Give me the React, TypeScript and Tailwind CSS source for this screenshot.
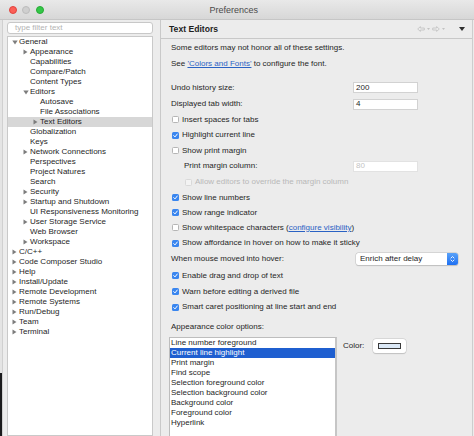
import React from 'react';

type TreeNode = {
  label: string;
  level: 0 | 1 | 2;
  arrow?: 'right' | 'down';
  selected?: boolean;
};

const TREE: TreeNode[] = [
  { label: 'General', level: 0, arrow: 'down' },
  { label: 'Appearance', level: 1, arrow: 'right' },
  { label: 'Capabilities', level: 1 },
  { label: 'Compare/Patch', level: 1 },
  { label: 'Content Types', level: 1 },
  { label: 'Editors', level: 1, arrow: 'down' },
  { label: 'Autosave', level: 2 },
  { label: 'File Associations', level: 2 },
  { label: 'Text Editors', level: 2, arrow: 'right', selected: true },
  { label: 'Globalization', level: 1 },
  { label: 'Keys', level: 1 },
  { label: 'Network Connections', level: 1, arrow: 'right' },
  { label: 'Perspectives', level: 1 },
  { label: 'Project Natures', level: 1 },
  { label: 'Search', level: 1 },
  { label: 'Security', level: 1, arrow: 'right' },
  { label: 'Startup and Shutdown', level: 1, arrow: 'right' },
  { label: 'UI Responsiveness Monitoring', level: 1 },
  { label: 'User Storage Service', level: 1, arrow: 'right' },
  { label: 'Web Browser', level: 1 },
  { label: 'Workspace', level: 1, arrow: 'right' },
  { label: 'C/C++', level: 0, arrow: 'right' },
  { label: 'Code Composer Studio', level: 0, arrow: 'right' },
  { label: 'Help', level: 0, arrow: 'right' },
  { label: 'Install/Update', level: 0, arrow: 'right' },
  { label: 'Remote Development', level: 0, arrow: 'right' },
  { label: 'Remote Systems', level: 0, arrow: 'right' },
  { label: 'Run/Debug', level: 0, arrow: 'right' },
  { label: 'Team', level: 0, arrow: 'right' },
  { label: 'Terminal', level: 0, arrow: 'right' },
];

const INDENT = { 0: 'pl-[4px]', 1: 'pl-[15px]', 2: 'pl-[25px]' } as const;

const COLOR_OPTIONS = [
  'Line number foreground',
  'Current line highlight',
  'Print margin',
  'Find scope',
  'Selection foreground color',
  'Selection background color',
  'Background color',
  'Foreground color',
  'Hyperlink',
];

function Triangle({ dir }: { dir: 'right' | 'down' }) {
  return dir === 'right' ? (
    <svg width="5" height="6" viewBox="0 0 5 6">
      <path d="M0.5 0.5 L4.5 3 L0.5 5.5 Z" fill="#7d7d7d" />
    </svg>
  ) : (
    <svg width="6" height="5" viewBox="0 0 6 5">
      <path d="M0.3 0.5 L5.7 0.5 L3 4.6 Z" fill="#7d7d7d" />
    </svg>
  );
}

function Check({ checked, disabled }: { checked?: boolean; disabled?: boolean }) {
  if (checked) {
    return (
      <span className="w-[7px] h-[7px] rounded-[1.5px] bg-[#3a86ef] flex items-center justify-center shrink-0">
        <svg width="5" height="5" viewBox="0 0 5 5">
          <path d="M0.7 2.6 L2 3.9 L4.3 1" stroke="white" strokeWidth="1" fill="none" strokeLinecap="round" strokeLinejoin="round" />
        </svg>
      </span>
    );
  }
  return (
    <span
      className={`w-[7px] h-[7px] rounded-[1.5px] border shrink-0 ${
        disabled ? 'border-[#d9d9d9] bg-[#f3f3f3]' : 'border-[#b5b5b5] bg-white'
      }`}
    />
  );
}

function CheckRow({
  h,
  checked,
  disabled,
  inset,
  children,
}: {
  h: string;
  checked?: boolean;
  disabled?: boolean;
  inset?: boolean;
  children: React.ReactNode;
}) {
  return (
    <div className={`${h} flex items-center ${inset ? 'pl-[14px]' : 'pl-[1px]'}`}>
      <Check checked={checked} disabled={disabled} />
      <span className={`ml-[3px] ${disabled ? 'text-[#b8b8b8]' : ''}`}>{children}</span>
    </div>
  );
}

function NavArrow({ flip }: { flip?: boolean }) {
  return (
    <svg width="8" height="6" viewBox="0 0 8 6" className={flip ? '-scale-x-100' : ''}>
      <path
        d="M0.7 3 L3.4 0.6 V2 H7.3 V4 H3.4 V5.4 Z"
        fill="none"
        stroke="#c2c2c2"
        strokeWidth="0.8"
        strokeLinejoin="round"
      />
    </svg>
  );
}

function SmallDrop({ color }: { color: string }) {
  return (
    <svg width="3" height="2" viewBox="0 0 3 2">
      <path d="M0 0 H3 L1.5 2 Z" fill={color} />
    </svg>
  );
}

export default function App() {
  return (
    <div className="w-[474px] h-[436px] overflow-hidden bg-[#ececec] flex flex-col font-['Liberation_Sans',Arial,sans-serif] text-[8px] leading-[10px] text-[#262626]">
      {/* title bar */}
      <div className="h-[20px] shrink-0 flex items-center relative bg-gradient-to-b from-[#e9e9e9] to-[#d7d7d7] border-b border-[#c6c6c6]">
        <div className="flex items-center gap-[5.5px] pl-[8.5px]">
          <span className="w-[8px] h-[8px] rounded-full bg-[#fc5f57] border-[0.5px] border-[#e0443e]" />
          <span className="w-[8px] h-[8px] rounded-full bg-[#cfcfcf] border-[0.5px] border-[#bcbcbc]" />
          <span className="w-[8px] h-[8px] rounded-full bg-[#33c748] border-[0.5px] border-[#27aa35]" />
        </div>
        <div className="flex-1 text-center text-[9px] text-[#4b4b4b] pr-[50px]">Preferences</div>
      </div>

      <div className="flex-1 flex min-h-0">
        {/* window edge */}
        <div className="w-[3px] flex flex-col border-r border-[#d0d0d0]">
          <div className="flex-1 bg-[#e4e4e4]" />
          <div className="h-[63px] bg-[#1b1b1d]" />
        </div>

        {/* left pane */}
        <div className="w-[158px] shrink-0 pl-[4px] pr-[7px] flex flex-col border-r border-[#c9c9c9]">
          <div className="mt-[2px] h-[12px] rounded-[3px] border border-[#c8c8c8] bg-white flex items-center pl-[7px] text-[#b3b3b3]">
            type filter text
          </div>
          <div className="mt-[2px] flex-1 bg-white border border-[#c9c9c9] pt-0">
            {TREE.map((n) => (
              <div
                key={n.label}
                className={`h-[10px] flex items-center ${INDENT[n.level]} ${n.selected ? 'bg-[#d7d7d7]' : ''}`}
              >
                <span className="w-[7px] shrink-0 flex items-center">{n.arrow && <Triangle dir={n.arrow} />}</span>
                <span className="whitespace-nowrap">{n.label}</span>
              </div>
            ))}
          </div>
        </div>

        {/* right pane */}
        <div className="flex-1 flex flex-col mr-[1px] border-r border-[#cdcdcd] min-w-0">
          <div className="h-[19px] shrink-0 border-b border-[#c8c8c8] flex items-center justify-between pl-[8px] pr-[7px]">
            <span className="font-bold text-[8.6px] text-[#1e1e1e]">Text Editors</span>
            <div className="flex items-center">
              <NavArrow />
              <span className="ml-[2px]"><SmallDrop color="#c2c2c2" /></span>
              <span className="ml-[2px]"><NavArrow flip /></span>
              <span className="ml-[2px]"><SmallDrop color="#c2c2c2" /></span>
              <svg width="6" height="4" viewBox="0 0 6 4" className="ml-[14px]">
                <path d="M0 0 H6 L3 4 Z" fill="#2e2e2e" />
              </svg>
            </div>
          </div>

          <div className="flex-1 flex flex-col pl-[10px] min-h-0">
            <div className="h-[17px] flex items-center">Some editors may not honor all of these settings.</div>
            <div className="h-[16px] flex items-center whitespace-pre">
              <span>See </span>
              <span className="text-[#2a62c4] underline">'Colors and Fonts'</span>
              <span> to configure the font.</span>
            </div>

            <div className="mt-[7px] h-[17px] flex items-center">
              <span className="w-[182px]">Undo history size:</span>
              <span className="w-[65px] h-[11px] bg-white border border-[#d2d2d2] flex items-center pl-[2px]">200</span>
            </div>
            <div className="h-[16px] flex items-center">
              <span className="w-[182px]">Displayed tab width:</span>
              <span className="w-[65px] h-[11px] bg-white border border-[#d2d2d2] flex items-center pl-[2px]">4</span>
            </div>

            <CheckRow h="h-[15px]">Insert spaces for tabs</CheckRow>
            <CheckRow h="h-[16px]" checked>Highlight current line</CheckRow>
            <CheckRow h="h-[15px]">Show print margin</CheckRow>

            <div className="h-[16px] flex items-center pl-[13px]">
              <span className="w-[169px]">Print margin column:</span>
              <span className="w-[65px] h-[11px] bg-white border border-[#e2e2e2] flex items-center pl-[2px] text-[#c4c4c4]">80</span>
            </div>
            <CheckRow h="h-[16px]" disabled inset>Allow editors to override the margin column</CheckRow>

            <CheckRow h="h-[15px]" checked>Show line numbers</CheckRow>
            <CheckRow h="h-[15px]" checked>Show range indicator</CheckRow>
            <CheckRow h="h-[15px]">
              Show whitespace characters (<span className="text-[#2a62c4] underline">configure visibility</span>)
            </CheckRow>
            <CheckRow h="h-[16px]" checked>Show affordance in hover on how to make it sticky</CheckRow>

            <div className="h-[16px] flex items-center">
              <span className="w-[185px]">When mouse moved into hover:</span>
              <span className="w-[102px] h-[12px] bg-white rounded-[2.5px] shadow-[0_0_0_0.5px_#c4c4c4,0_0.5px_1px_rgba(0,0,0,0.2)] flex items-center pl-[4px] justify-between">
                <span>Enrich after delay</span>
                <span className="w-[11px] h-[12px] rounded-r-[2.5px] bg-gradient-to-b from-[#5aa2f8] to-[#1d6ff2] flex items-center justify-center">
                  <svg width="5" height="8" viewBox="0 0 5 8">
                    <path d="M1 3 L2.5 1.5 L4 3 M1 5 L2.5 6.5 L4 5" stroke="white" strokeWidth="0.9" fill="none" strokeLinecap="round" strokeLinejoin="round" />
                  </svg>
                </span>
              </span>
            </div>

            <CheckRow h="h-[17px]" checked>Enable drag and drop of text</CheckRow>
            <CheckRow h="h-[15px]" checked>Warn before editing a derived file</CheckRow>
            <CheckRow h="h-[16px]" checked>Smart caret positioning at line start and end</CheckRow>

            <div className="mt-[5px] h-[14px] flex items-center">Appearance color options:</div>

            <div className="mt-[3px] flex-1 flex min-h-0 -ml-[2px]">
              <div className="w-[168px] bg-white border border-[#bdbdbd] border-r-[2px] border-r-[#c6c6c6] border-b-0">
                {COLOR_OPTIONS.map((c, i) => (
                  <div
                    key={c}
                    className={`h-[10px] flex items-center pl-[1px] ${i === 1 ? 'bg-[#1f5fd0] text-white' : ''}`}
                  >
                    {c}
                  </div>
                ))}
              </div>
              <div className="ml-[6px] mt-[2px] h-[14px] flex items-center">
                <span>Color:</span>
                <span className="ml-[9px] w-[33px] h-[14px] bg-white rounded-[3px] shadow-[0_0_0_0.5px_#c8c8c8,0_0.5px_1px_rgba(0,0,0,0.2)] flex items-center justify-center">
                  <span className="w-[23px] h-[6px] bg-[#dce9f7] border border-[#3a3a3a]" />
                </span>
              </div>
            </div>
          </div>
        </div>
      </div>
    </div>
  );
}
